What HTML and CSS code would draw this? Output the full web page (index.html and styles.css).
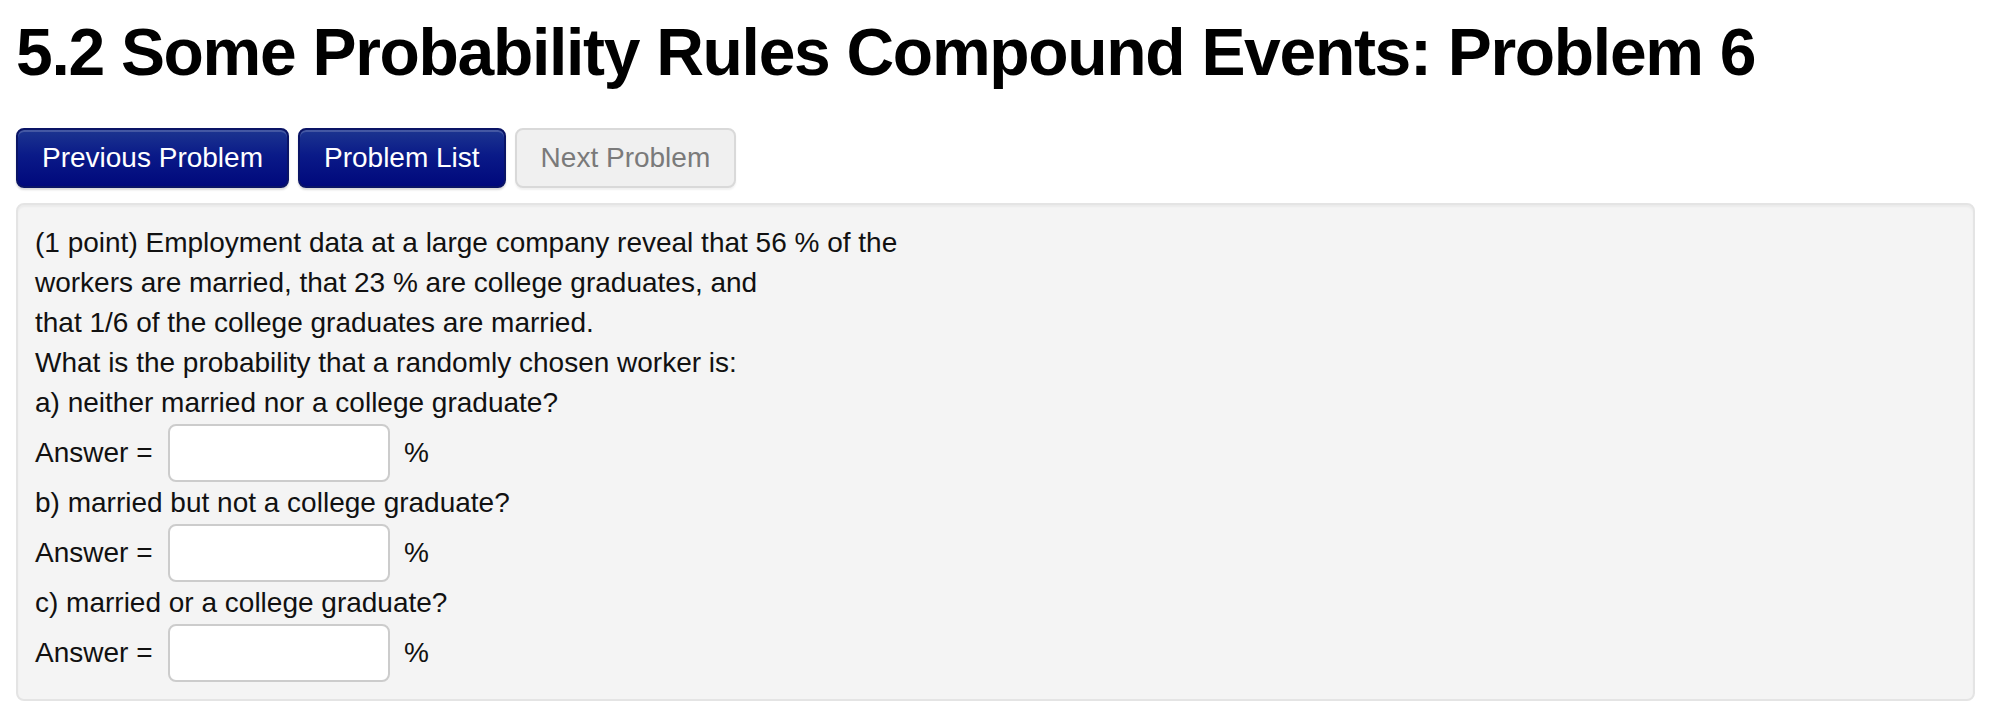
FILE: index.html
```html
<!DOCTYPE html>
<html lang="en">
<head>
<meta charset="utf-8">
<title>5.2 Some Probability Rules Compound Events: Problem 6</title>
<link rel="stylesheet" href="styles.css">
</head>
<body>
<div class="page">
  <h1 class="title">5.2 Some Probability Rules Compound Events: Problem 6</h1>
  <div class="nav">
    <a class="btn btn-primary" href="#">Previous Problem</a>
    <a class="btn btn-primary" href="#">Problem List</a>
    <span class="btn btn-disabled">Next Problem</span>
  </div>
  <div class="well">
    <div class="line">(1 point) Employment data at a large company reveal that 56 % of the</div>
    <div class="line">workers are married, that 23 % are college graduates, and</div>
    <div class="line">that 1/6 of the college graduates are married.</div>
    <div class="line">What is the probability that a randomly chosen worker is:</div>
    <div class="line">a) neither married nor a college graduate?</div>
    <div class="answer"><span class="label">Answer =</span><input class="field" type="text"><span class="unit">%</span></div>
    <div class="line line-b">b) married but not a college graduate?</div>
    <div class="answer"><span class="label">Answer =</span><input class="field" type="text"><span class="unit">%</span></div>
    <div class="line line-c">c) married or a college graduate?</div>
    <div class="answer"><span class="label">Answer =</span><input class="field" type="text"><span class="unit">%</span></div>
  </div>
</div>
</body>
</html>
```
FILE: styles.css
```css
html, body {
  margin: 0;
  padding: 0;
  background: #ffffff;
}
body {
  font-family: "Liberation Sans", Arial, Helvetica, sans-serif;
  color: #000;
  overflow: hidden;
}
.page {
  padding: 14px 0 0 16px;
}
.title {
  margin: 0;
  font-size: 66px;
  line-height: 76px;
  font-weight: bold;
  color: #000;
  letter-spacing: -1.3px;
}
.nav {
  display: flex;
  gap: 9px;
  margin-top: 38px;
}
.btn {
  display: inline-flex;
  align-items: center;
  height: 60px;
  box-sizing: border-box;
  padding: 0 24px;
  font-size: 28px;
  border-radius: 8px;
  text-decoration: none;
  border: 2px solid;
}
.btn-primary {
  color: #fff;
  background: linear-gradient(to bottom, #1c3590 0%, #0a1a88 45%, #00087c 100%);
  border-color: #0a1466;
  box-shadow: inset 0 2px 0 rgba(255,255,255,0.18), 0 2px 2px rgba(0,0,0,0.15);
}
.btn-disabled {
  color: #7a7a7a;
  background: #f0f0f0;
  border-color: #d9d9d9;
  box-shadow: 0 2px 2px rgba(0,0,0,0.06);
}
.well {
  margin-top: 15px;
  width: 1959px;
  box-sizing: border-box;
  padding: 18px 19px 16px 17px;
  background: #f4f4f4;
  border: 2px solid #e4e4e4;
  border-radius: 8px;
  box-shadow: inset 0 2px 2px rgba(0,0,0,0.04);
  font-size: 28px;
  color: #111;
  min-height: 498px;
}
.line {
  line-height: 40px;
  white-space: nowrap;
}
.line-b,
.line-c {
  line-height: 41px;
}
.answer {
  display: flex;
  align-items: center;
  height: 59px;
  line-height: 40px;
}
.label {
  width: 133px;
}
.field {
  width: 222px;
  height: 58px;
  box-sizing: border-box;
  margin: 0;
  border: 2px solid #cccccc;
  border-radius: 8px;
  background: #fff;
  font-size: 26px;
  font-family: inherit;
  padding: 0 10px;
}
.unit {
  margin-left: 14px;
}
```
